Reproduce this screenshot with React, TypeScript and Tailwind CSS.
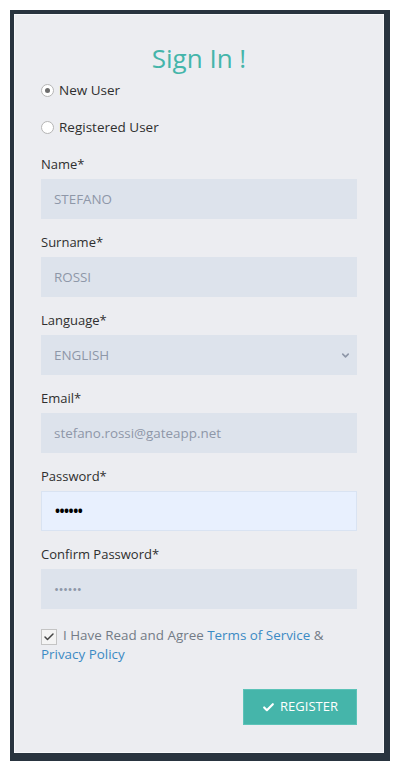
import { Check, ChevronDown } from "lucide-react";

const font = { fontFamily: '"Open Sans", "Noto Sans", sans-serif' };

function Field({ label, value, kind = "text" }: { label: string; value: string; kind?: "text" | "select" | "pwd" | "pwdFocus" }) {
  const base = "h-10 w-full pl-[13px] pr-[13px] flex items-center text-[13.4px]";
  return (
    <div className="flex flex-col">
      <label className="h-5 leading-5 text-[13px] text-[#2f2f2f] mb-[5px]">{label}</label>
      {kind === "pwdFocus" ? (
        <div className={`${base} bg-[#e8f0fe] border border-[#d9e3f2] text-black tracking-[-0.5px] font-bold`}>{value}</div>
      ) : kind === "pwd" ? (
        <div className={`${base} bg-[#dde3ec] text-[#8e97a8] tracking-[-0.5px]`}>{value}</div>
      ) : (
        <div className={`${base} bg-[#dde3ec] text-[#8e97a8] justify-between`}>
          <span>{value}</span>
          {kind === "select" && <ChevronDown className="w-[11px] h-[11px] text-[#8e97a8] mr-[-7px]" strokeWidth={3.5} />}
        </div>
      )}
    </div>
  );
}

function Radio({ label, checked }: { label: string; checked?: boolean }) {
  return (
    <div className="flex items-center h-5 gap-[5px]">
      <span className="w-[13px] h-[13px] rounded-full border border-[#b5b5b5] bg-white flex items-center justify-center">
        {checked && <span className="w-[5px] h-[5px] rounded-full bg-[#6d6d6d]" />}
      </span>
      <span className="text-[13.5px] text-[#2f2f2f]">{label}</span>
    </div>
  );
}

export default function App() {
  return (
    <div className="min-h-[770px] bg-white pt-[10px] px-[10px]" style={font}>
      <div className="bg-[#29343f] pt-1 pl-1 pr-[6px] pb-2 w-[380px]">
        <div className="bg-[#ecedf1] border border-[#f7f8fa] px-[26px] pt-[25px] pb-[27px]">
          <h1 className="h-9 leading-9 text-center text-[26px] text-[#45b5aa]">Sign In !</h1>

          <div className="mt-1 flex flex-col gap-[17px]">
            <Radio label="New User" checked />
            <Radio label="Registered User" />
          </div>

          <div className="mt-[17px] flex flex-col gap-[13px]">
            <Field label="Name*" value="STEFANO" />
            <Field label="Surname*" value="ROSSI" />
            <Field label="Language*" value="ENGLISH" kind="select" />
            <Field label="Email*" value="stefano.rossi@gateapp.net" />
            <Field label="Password*" value="••••••" kind="pwdFocus" />
            <Field label="Confirm Password*" value="••••••" kind="pwd" />
          </div>

          <p className="mt-[17px] text-[13.4px] leading-[18px] text-[#737b86]">
            <span className="inline-flex align-[-3px] w-4 h-4 border border-[#c4c4c4] bg-[#f4f4f4] items-center justify-center mr-[6px]">
              <Check className="w-3 h-3 text-[#444]" strokeWidth={3} />
            </span>
            I Have Read and Agree <span className="text-[#3b8ac4]">Terms of Service</span> &amp;{" "}
            <span className="text-[#3b8ac4]">Privacy Policy</span>
          </p>

          <div className="mt-[26px] flex justify-end">
            <button className="h-9 w-[114px] bg-[#45b5aa] border border-[#5cc3b8] text-white text-[13px] flex items-center justify-center gap-[5px]">
              <Check className="w-[13px] h-[13px]" strokeWidth={4} />
              REGISTER
            </button>
          </div>
        </div>
      </div>
    </div>
  );
}
